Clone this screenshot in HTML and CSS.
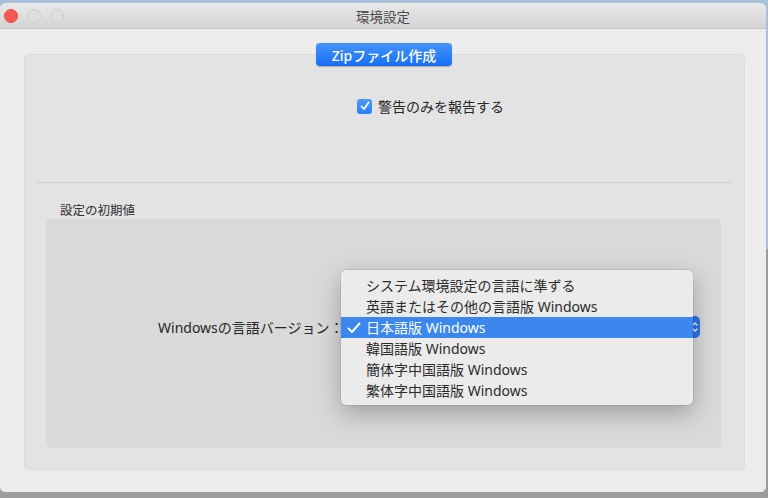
FILE: index.html
```html
<!DOCTYPE html>
<html lang="ja">
<head>
<meta charset="UTF-8" />
<title>環境設定</title>
<link rel="stylesheet" href="styles.css">
</head>
<body>
    <div class="window">
        <div class="titlebar">
            <div class="lights">
                <span class="light light--close"></span>
                <span class="light"></span>
                <span class="light"></span>
            </div>
            <div class="title">環境設定</div>
        </div>
        <div class="content">
            <div class="tab-row">
                <button class="tab">Zipファイル作成</button>
            </div>
            <div class="panel">
                <label class="check-row">
                    <span class="checkbox">
                        <svg width="12" height="12" viewBox="0 0 12 12"><path d="M2.5 6.4 L5 9 L9.6 2.4" fill="none" stroke="#fff" stroke-width="1.8" stroke-linecap="round" stroke-linejoin="round"/></svg>
                    </span>
                    警告のみを報告する
                </label>
                <div class="separator"></div>
                <div class="group-title">設定の初期値</div>
                <div class="group">
                    <div class="field">
                        <span class="field-label">Windowsの言語バージョン：</span>
                        <div class="popup">
                            <span class="popup-arrows">
                                <svg width="6" height="12" viewBox="0 0 6 12"><path d="M1 4 L3 2 L5 4 M1 8 L3 10 L5 8" fill="none" stroke="#fff" stroke-width="1.2" stroke-linecap="round" stroke-linejoin="round"/></svg>
                            </span>
                            <ul class="menu">
                                <li>システム環境設定の言語に準ずる</li>
                                <li>英語またはその他の言語版 Windows</li>
                                <li class="selected">
                                    <svg class="tick" width="14" height="12" viewBox="0 0 14 12"><path d="M1.5 6.5 L5 10 L12.5 1.5" fill="none" stroke="#fff" stroke-width="2" stroke-linecap="round" stroke-linejoin="round"/></svg>
                                    日本語版 Windows
                                </li>
                                <li>韓国語版 Windows</li>
                                <li>簡体字中国語版 Windows</li>
                                <li>繁体字中国語版 Windows</li>
                            </ul>
                        </div>
                    </div>
                </div>
            </div>
        </div>
    </div>
</body>
</html>
```

FILE: styles.css
```css
*{
    box-sizing: border-box;
    font-family: "Noto Sans", "Noto Sans CJK JP", sans-serif;
}
body{
    margin: 0;
    padding-top: 3px;
    height: 498px;
    overflow: hidden;
    background: linear-gradient(#a9c0d8 0, #a9c0d8 50%, #9c9c9c 50%);
}
.window{
    width: 766px;
    height: 489px;
    background-color: #ececec;
    border-radius: 6px 6px 5px 5px;
    overflow: hidden;
}
.titlebar{
    position: relative;
    height: 26px;
    background: linear-gradient(#e8e8e8, #d4d4d4);
    border-bottom: 1px solid #c2c2c2;
    display: flex;
    align-items: center;
    justify-content: center;
}
.lights{
    position: absolute;
    left: 4px;
    top: 6px;
    display: flex;
    gap: 9px;
}
.light{
    width: 14px;
    height: 14px;
    border-radius: 50%;
    background-color: #dedede;
    border: 1px solid #cbcbcb;
}
.light--close{
    background-color: #fc5753;
    border-color: #e94b47;
}
.title{
    font-size: 13.5px;
    color: #4a4a4a;
}
.content{
    padding: 14px 0 0 24px;
}
.tab-row{
    position: relative;
    z-index: 1;
    display: flex;
    padding-left: 292px;
}
.tab{
    height: 23px;
    width: 136px;
    border: none;
    border-radius: 4px;
    background: linear-gradient(#4495fb, #186ef6);
    color: #fff;
    font-size: 14px;
    font-weight: 500;
    padding: 0;
    box-shadow: 0 0.5px 1px rgba(0, 0, 0, 0.25);
}
.panel{
    margin-top: -12px;
    width: 721px;
    height: 416px;
    background-color: #e3e3e3;
    border: 1px solid #dcdcdc;
    border-radius: 5px;
    padding-top: 42px;
}
.check-row{
    display: flex;
    align-items: center;
    gap: 6px;
    padding-left: 332px;
    font-size: 14px;
    color: #262626;
    height: 18px;
}
.checkbox{
    width: 15px;
    height: 15px;
    border-radius: 3px;
    background: linear-gradient(#4d9bfb, #2a7cf5);
    display: flex;
    align-items: center;
    justify-content: center;
}
.separator{
    margin: 67px 13px 0 12px;
    height: 1px;
    background-color: #cdcdcd;
}
.group-title{
    margin: 20px 0 0 35px;
    font-size: 12.5px;
    color: #303030;
    height: 16px;
    line-height: 16px;
}
.group{
    margin: 0 23px 0 21px;
    height: 229px;
    background-color: #d9d9d9;
    border-radius: 5px;
    padding-top: 97px;
}
.field{
    display: flex;
    align-items: center;
    padding-left: 112px;
}
.field-label{
    font-size: 14px;
    color: #262626;
    width: 183px;
    white-space: nowrap;
}
.popup{
    position: relative;
    width: 359px;
    height: 22px;
    border-radius: 5px;
    background-color: #2f73e6;
}
.popup-arrows{
    position: absolute;
    right: 2px;
    top: 5px;
    display: flex;
}
.menu{
    position: absolute;
    left: 0;
    top: -46px;
    width: 352px;
    margin: 0;
    padding: 5px 0 4px;
    list-style: none;
    background-color: #ebebeb;
    border-radius: 5px;
    box-shadow: 0 0 0 0.5px rgba(0, 0, 0, 0.15), 0 8px 24px rgba(0, 0, 0, 0.28);
}
.menu li{
    position: relative;
    height: 21px;
    line-height: 21px;
    padding-left: 25px;
    font-size: 14px;
    color: #2b2b2b;
}
.menu li.selected{
    background-color: #3b87ee;
    color: #fff;
}
.tick{
    position: absolute;
    left: 6px;
    top: 5px;
}
```
